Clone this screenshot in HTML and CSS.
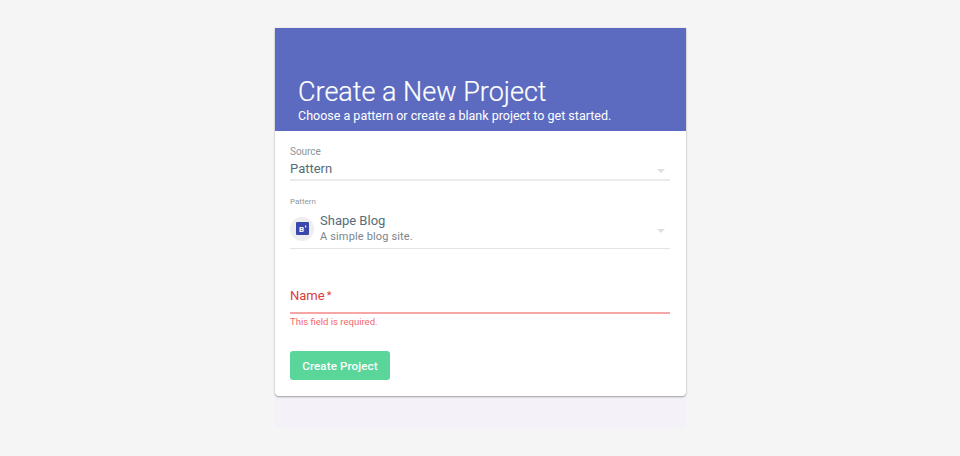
FILE: index.html
```html
<!DOCTYPE html>
<html lang="en">
<head>
<meta charset="utf-8">
<title>Create a New Project</title>
<link rel="stylesheet" href="styles.css">
</head>
<body>
<main class="wrap">
  <section class="card">
    <header class="head">
      <h1 class="title">Create a New Project</h1>
      <p class="sub">Choose a pattern or create a blank project to get started.</p>
    </header>
    <form class="form">
      <div class="field source">
        <div class="label">Source</div>
        <div class="value-row">
          <span class="value">Pattern</span>
          <span class="caret"></span>
        </div>
      </div>
      <div class="field pattern">
        <div class="label small">Pattern</div>
        <div class="pattern-row">
          <span class="avatar">
            <svg class="logo" width="13" height="13" viewBox="0 0 13 13"><rect width="13" height="13" rx="1" fill="#3949ab"/><text x="3" y="9.6" class="logo-text">B</text><rect x="9" y="3.6" width="1.2" height="1.8" fill="#fff"/></svg>
          </span>
          <span class="pattern-text">
            <span class="value">Shape Blog</span>
            <span class="desc">A simple blog site.</span>
          </span>
          <span class="caret"></span>
        </div>
      </div>
      <div class="field name">
        <div class="name-label">Name<span class="star">*</span></div>
        <div class="error">This field is required.</div>
      </div>
      <button class="btn" type="button">Create Project</button>
    </form>
  </section>
  <div class="under"></div>
</main>
</body>
</html>
```
FILE: styles.css
```css
* { box-sizing: border-box; }
html, body { margin: 0; height: 100%; }
body {
  background: #f5f5f5;
  font-family: Roboto, "Liberation Sans", sans-serif;
  overflow: hidden;
}
.wrap {
  width: 411px;
  margin-left: 275px;
  padding-top: 28px;
}
.card {
  background: #fff;
  border-radius: 0 0 4px 4px;
  box-shadow: 0 1px 2px rgba(0,0,0,.35), 0 0 1px rgba(0,0,0,.2);
  height: 368px;
  overflow: hidden;
  position: relative;
}
.under {
  height: 32px;
  background: #f4f2f8;
  border-radius: 0 0 4px 4px;
}
.head {
  background: #5c6bc0;
  height: 103px;
  padding: 47px 23px 0;
  color: #fff;
}
.title {
  margin: 0;
  font-size: 27px;
  line-height: 34px;
  font-weight: 300;
  -webkit-text-stroke: .2px #fff;
}
.sub {
  margin: 0;
  font-size: 12.5px;
  line-height: 14px;
  font-weight: 400;
}
.form { padding: 15px 16px 0 15px; }
.label {
  font-size: 10px;
  line-height: 12px;
  color: #8a959b;
  letter-spacing: -.05px;
}
.label.small { font-size: 8px; line-height: 10px; color: #8f999e; letter-spacing: 0; }
.value {
  font-size: 13px;
  line-height: 17px;
  color: #546e7a;
}
.source { height: 35px; border-bottom: 2px solid #e9ebec; }
.value-row {
  display: flex;
  align-items: center;
  justify-content: space-between;
  padding: 0 5px 0 0;
  height: 20px;
}
.caret {
  width: 0;
  height: 0;
  border-left: 4px solid transparent;
  border-right: 4px solid transparent;
  border-top: 4px solid #dcdfe1;
  margin-top: 5px;
}
.pattern { margin-top: 16px; height: 52px; border-bottom: 1px solid #e1e4e6; }
.pattern-row {
  display: flex;
  align-items: center;
  padding-right: 5px;
  margin-top: 5px;
}
.avatar {
  width: 24px;
  height: 24px;
  border-radius: 50%;
  background: #eeeeee;
  display: flex;
  align-items: center;
  justify-content: center;
  margin-right: 6px;
}
.logo { display: block; }
.logo-text { font-size: 8px; font-weight: 700; fill: #fff; font-family: Roboto, sans-serif; }
.pattern-text { display: flex; flex-direction: column; flex: 1; }
.desc {
  font-size: 11px;
  line-height: 16px;
  color: #7b868d;
  letter-spacing: .15px;
}
.name { margin-top: 39px; }
.name-label {
  font-size: 13px;
  line-height: 15px;
  color: #dc3c3c;
  height: 26px;
  border-bottom: 2px solid #f7a6a6;
}
.star { margin-left: 2px; font-size: 11px; vertical-align: 1px; }
.error {
  margin-top: 2px;
  font-size: 9.5px;
  line-height: 12px;
  color: #f4686a;
}
.btn {
  display: block;
  margin-top: 23px;
  width: 100px;
  height: 29px;
  border: 0;
  border-radius: 3px;
  background: #5bd69b;
  color: #fff;
  font-family: Roboto, sans-serif;
  font-size: 11.5px;
  font-weight: 500;
  letter-spacing: .15px;
  padding: 0;
}
```
